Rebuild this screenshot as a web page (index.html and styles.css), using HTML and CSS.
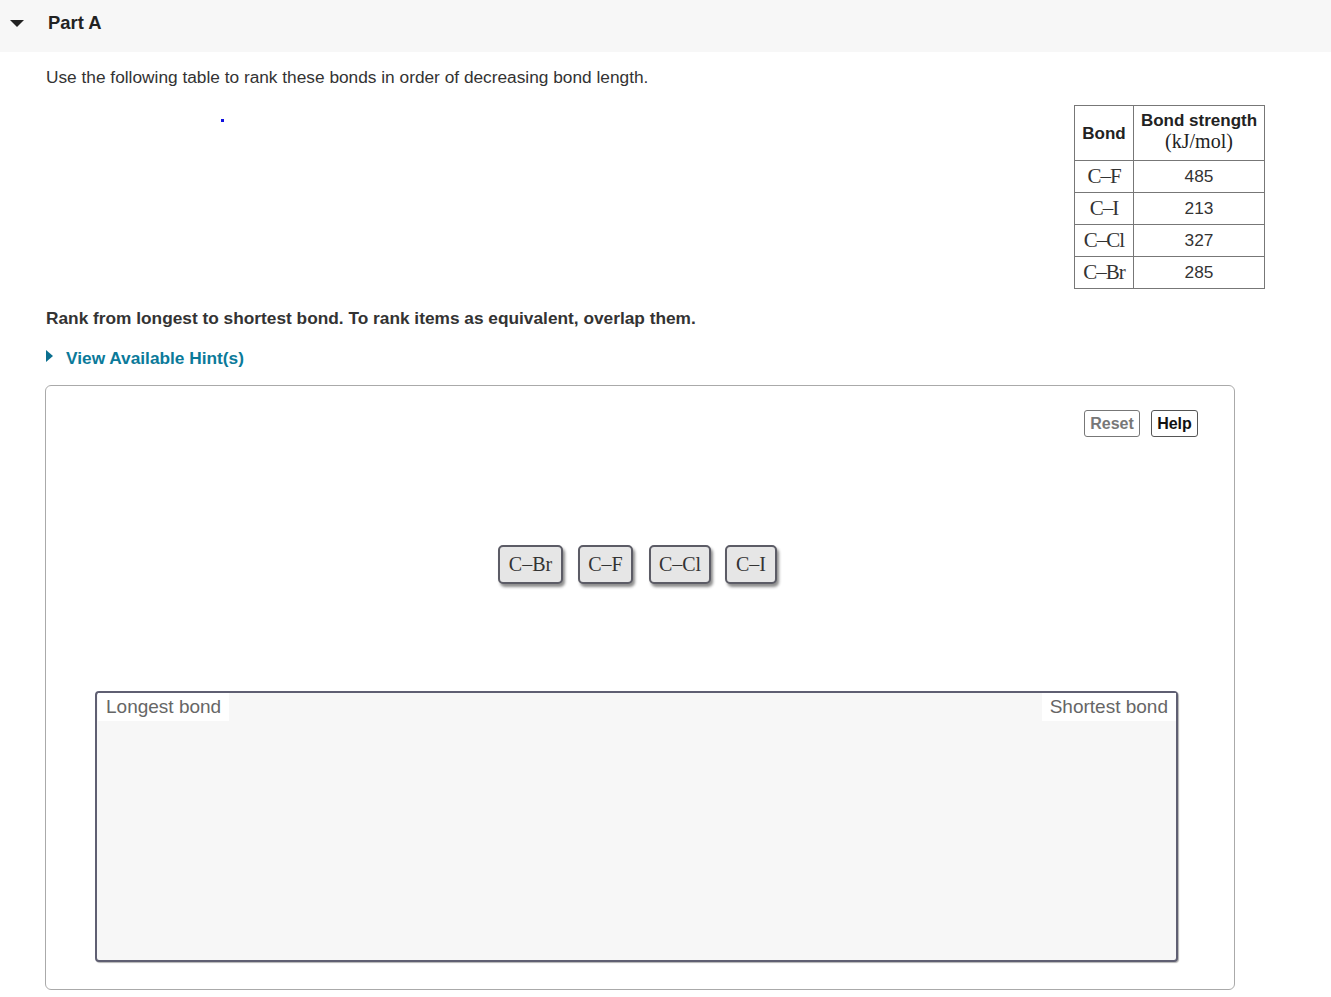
FILE: index.html
```html
<!DOCTYPE html>
<html>
<head>
<meta charset="utf-8">
<link rel="stylesheet" href="styles.css">
</head>
<body>
<div class="part-header">
  <span class="caret-down"></span>
  <span class="part-title">Part A</span>
</div>
<div class="content">
  <p class="intro">Use the following table to rank these bonds in order of decreasing bond length.</p>
  <div class="table-row">
    <span class="dot"></span>
    <table class="bonds">
      <tr class="head">
        <th class="c1">Bond</th>
        <th class="c2">Bond strength<br><span class="math">(kJ/mol)</span></th>
      </tr>
      <tr><td class="math">C–F</td><td>485</td></tr>
      <tr><td class="math">C–I</td><td>213</td></tr>
      <tr><td class="math">C–Cl</td><td>327</td></tr>
      <tr><td class="math">C–Br</td><td>285</td></tr>
    </table>
  </div>
  <p class="rank-text">Rank from longest to shortest bond. To rank items as equivalent, overlap them.</p>
  <div class="hint"><span class="caret-right"></span><span>View Available Hint(s)</span></div>
  <div class="panel">
    <div class="buttons">
      <button class="btn reset">Reset</button>
      <button class="btn help">Help</button>
    </div>
    <div class="tiles">
      <div class="tile">C–Br</div>
      <div class="tile">C–F</div>
      <div class="tile">C–Cl</div>
      <div class="tile">C–I</div>
    </div>
    <div class="rankbox">
      <span class="label">Longest bond</span>
      <span class="label">Shortest bond</span>
    </div>
  </div>
</div>
</body>
</html>
```
FILE: styles.css
```css
html, body { margin: 0; padding: 0; background: #fff; }
body { font-family: "Liberation Sans", Arial, sans-serif; color: #333; }
.part-header {
  height: 52px; background: #f7f7f7; display: flex; align-items: center;
}
.caret-down {
  width: 0; height: 0; margin-left: 10px; margin-right: 24px; margin-top: -6px;
  border-left: 7px solid transparent; border-right: 7px solid transparent;
  border-top: 7px solid #222;
}
.part-title { font-weight: bold; font-size: 18.4px; color: #222; margin-top: -7px; }
.content { padding-left: 46px; }
.intro { margin: 15px 0 0 0; font-size: 17.3px; line-height: 21px; color: #333; }
.table-row { display: flex; align-items: flex-start; margin-top: 17px; height: 185px; }
.dot { width: 3px; height: 3px; background: #1010e0; margin-left: 175px; margin-top: 14px; }
.bonds {
  margin-left: 850px; border-collapse: collapse; border: 1px solid #222;
  font-size: 17.3px;
}
.bonds td, .bonds th { border: 1px solid #777; text-align: center; padding: 0; }
.bonds tr { height: 32px; }
.bonds tr.head { height: 55px; }
.bonds th { font-weight: bold; color: #222; font-size: 17px; line-height: 21px; }
.bonds .c1 { width: 58px; }
.bonds .c2 { width: 130px; padding-bottom: 3px; }
.bonds th .math { font-weight: normal; font-size: 20px; }
.bonds td { color: #333; }
.math { font-family: "Liberation Serif", "Times New Roman", serif; font-size: 21px; color: #222; }
.bonds td.math { letter-spacing: -1px; }
.rank-text { margin: 18px 0 0 0; font-weight: bold; font-size: 17.3px; line-height: 20px; color: #333; }
.hint {
  display: flex; align-items: center; margin-top: 20px; color: #0b7a9a;
  font-weight: bold; font-size: 17.3px; line-height: 20px;
}
.caret-right {
  width: 0; height: 0; margin-right: 13px;
  border-top: 6px solid transparent; border-bottom: 6px solid transparent;
  border-left: 7px solid #0b6f8f; margin-top: -4px;
}
.panel {
  margin-top: 17px; margin-left: -1px; width: 1188px; height: 603px;
  border: 1px solid #aaa; border-radius: 6px; box-sizing: content-box;
  display: flex; flex-direction: column;
}
.buttons { display: flex; justify-content: flex-end; gap: 11px; margin-top: 24px; margin-right: 36px; }
.btn {
  font-family: "Liberation Sans", Arial, sans-serif; font-weight: bold; font-size: 16px;
  background: #fff; border: 1px solid #707070; border-radius: 3px; height: 27px;
  padding: 0 5px; line-height: 24px;
}
.reset { color: #777; width: 56px; border-color: #777; }
.help { color: #111; width: 47px; border-color: #555; }
.tiles { display: flex; justify-content: flex-start; gap: 14px; margin-left: 452px; margin-top: 108px; }
.tile {
  font-family: "Liberation Serif", "Times New Roman", serif; font-size: 20px; color: #333;
  background: #e6e6e6; border: 2px solid #5c5c66; border-radius: 5px;
  height: 35px; line-height: 34px; padding: 0 8px;
  box-shadow: 2px 3px 3px rgba(0,0,0,0.45);
}
.tile:nth-child(1) { width: 45px; text-align: center; padding: 0 8px; }
.tile:nth-child(2) { width: 37px; text-align: center; padding: 0 7px; margin-left: 1px; }
.tile:nth-child(3) { width: 44px; text-align: center; padding: 0 7px; margin-left: 2px; }
.tile:nth-child(4) { width: 34px; text-align: center; padding: 0 7px; }
.rankbox {
  margin-top: 107px; margin-left: 49px; width: 1079px; height: 267px;
  background: #f7f7f7; border: 2px solid #5f5f72; border-radius: 4px;
  display: flex; justify-content: space-between; align-items: flex-start;
  box-shadow: 1px 1px 1px rgba(0,0,0,0.3);
}
.label {
  background: #fff; color: #666; font-size: 19px; line-height: 28px;
  padding: 0 8px;
}
.label:first-child { margin-left: 1px; }
```
